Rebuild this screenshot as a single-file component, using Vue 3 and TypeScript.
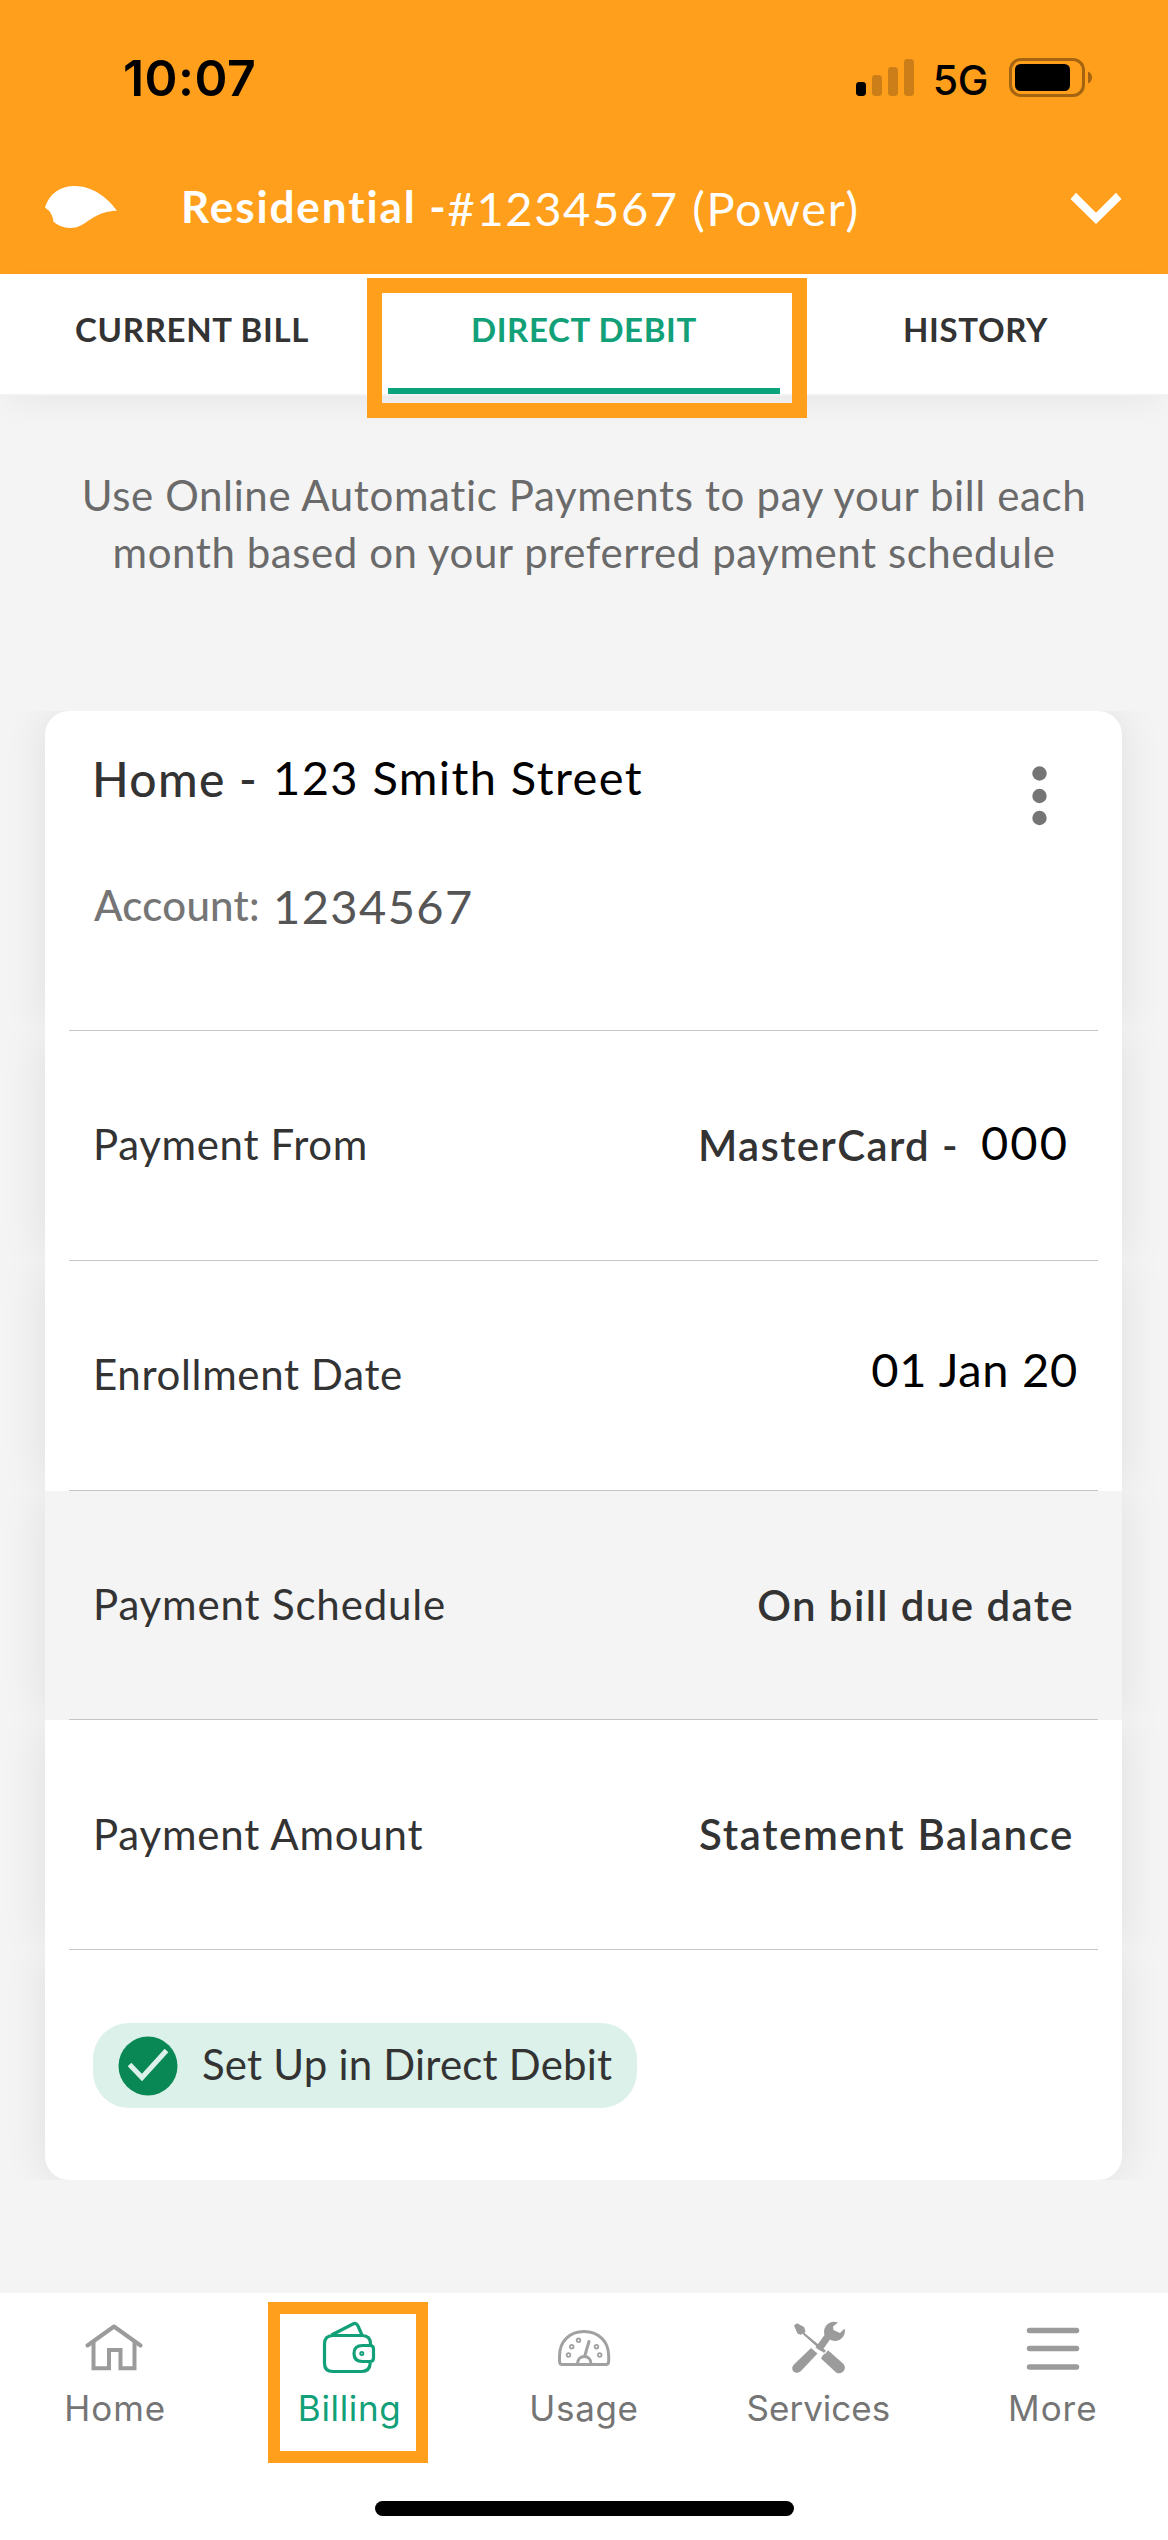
<script setup lang="ts">
interface Tab { label: string; cls: string }
interface NavItem { id: string; label: string; spacing: string }

const tabs: Tab[] = [
  { label: 'CURRENT BILL', cls: 'tab-bill' },
  { label: 'DIRECT DEBIT', cls: 'tab-debit' },
  { label: 'HISTORY', cls: 'tab-history' }
]

const navItems: NavItem[] = [
  { id: 'home', label: 'Home', spacing: 'wide' },
  { id: 'billing', label: 'Billing', spacing: 'mid' },
  { id: 'usage', label: 'Usage', spacing: 'mid' },
  { id: 'services', label: 'Services', spacing: 'none' },
  { id: 'more', label: 'More', spacing: 'wide' }
]
</script>

<template>
  <div class="app">
    <header class="header">
      <div class="status">
        <span class="time">10:07</span>
        <div class="indicators">
          <svg class="signal" width="58" height="37" viewBox="0 0 58 37">
            <rect x="0" y="23" width="10" height="14" rx="3.4" fill="#000" />
            <rect x="16" y="16" width="10" height="21" rx="3.4" fill="#cc7f18" />
            <rect x="32" y="8" width="10" height="29" rx="3.4" fill="#cc7f18" />
            <rect x="48" y="0" width="10" height="37" rx="3.4" fill="#cc7f18" />
          </svg>
          <span class="network">5G</span>
          <svg class="battery" width="84" height="39" viewBox="0 0 84 39">
            <rect x="1.5" y="1.5" width="73" height="36" rx="10.5" fill="none" stroke="#a56410" stroke-width="3" />
            <rect x="6" y="6" width="55" height="27" rx="5.5" fill="#000" />
            <path d="M79 13.500c5.400 2 5.400 10 0 12z" fill="#a56410" />
          </svg>
        </div>
      </div>
      <div class="account">
        <svg class="leaf" width="72" height="42" viewBox="0 0 72 42">
          <path d="M0 21.500C4 8 15 0 29.500 0C47 0 62 11 72 24.700C64 24.700 56 26.500 46 33C37 39 33 42 25.500 42C18 42 12 39 8.400 35.500C8 32 7.500 30 6 28C5 25 3 24 0 21.500z" fill="#fff" />
        </svg>
        <span class="account-type">Residential -</span>
        <span class="account-number">#1234567 (Power)</span>
        <svg class="chevron" width="52" height="32" viewBox="0 0 52 32">
          <path d="M0.500 7L6 0.700L26 20.700L46 0.700L51.500 7L26 32z" fill="#fff" />
        </svg>
      </div>
    </header>

    <nav class="tabs">
      <span v-for="tab in tabs" :key="tab.label" class="tab" :class="tab.cls">{{ tab.label }}</span>
      <div class="underline"></div>
      <div class="highlight highlight-tab"></div>
    </nav>

    <main class="content">
      <p class="intro">
        <span class="intro-a">Use Online Automatic Payments to pay your bill each</span><br />
        <span class="intro-b">month based on your preferred payment schedule</span>
      </p>

      <section class="card">
        <div class="block block-head">
          <div class="inner head">
            <div class="line">
              <span class="place">Home -</span>
              <span class="street">123 Smith Street</span>
              <svg class="dots" width="15" height="60" viewBox="0 0 15 60">
                <circle cx="7.500" cy="7.500" r="7.200" fill="#757575" />
                <circle cx="7.500" cy="30" r="7.200" fill="#757575" />
                <circle cx="7.500" cy="52" r="7.200" fill="#757575" />
              </svg>
            </div>
            <div class="line line-account">
              <span class="account-label">Account:</span>
              <span class="account-value">1234567</span>
            </div>
          </div>
        </div>
        <div class="block">
          <div class="inner row">
            <span class="label">Payment From</span>
            <span class="value card-type">MasterCard -</span>
            <span class="entry digits">000</span>
          </div>
        </div>
        <div class="block">
          <div class="inner row">
            <span class="label">Enrollment Date</span>
            <span class="entry date">01 Jan 20</span>
          </div>
        </div>
        <div class="block shaded">
          <div class="inner row row-short">
            <span class="label schedule">Payment Schedule</span>
            <span class="value due">On bill due date</span>
          </div>
        </div>
        <div class="block">
          <div class="inner row">
            <span class="label amount">Payment Amount</span>
            <span class="value balance">Statement Balance</span>
          </div>
        </div>
        <div class="block block-foot">
          <div class="pill">
            <svg width="60" height="60" viewBox="0 0 60 60">
              <circle cx="30" cy="30" r="29.500" fill="#098755" />
              <path d="M11.500 28.500L24 41.500L48.500 14.500" fill="none" stroke="#dbf1e9" stroke-width="5" />
            </svg>
            <span>Set Up in Direct Debit</span>
          </div>
        </div>
      </section>
    </main>

    <footer class="footer">
      <nav class="nav">
        <div v-for="item in navItems" :key="item.id" class="nav-item" :class="[item.id, item.spacing]">
          <svg v-if="item.id === 'home'" width="60" height="60" viewBox="85 2318 60 60">
            <g fill="none" stroke="#9b9b9b" stroke-width="4" stroke-linecap="round" stroke-linejoin="round">
              <path d="M87.500 2345.500L114 2326.500L140.500 2345.500" />
              <path d="M93.500 2342V2368.300H109V2350H120.500V2368.300H134.500V2342" stroke-linejoin="miter" />
            </g>
          </svg>
          <svg v-else-if="item.id === 'billing'" width="60" height="60" viewBox="320.500 2318 60 60">
            <g fill="none" stroke="#11a078" stroke-width="3.200" stroke-linejoin="round">
              <path d="M371 2345V2344Q371 2335.500 362.500 2335.500H333.500Q325 2335.500 325 2344V2363.500Q325 2371.500 333.500 2371.500H362.500Q370 2371.500 370.800 2363" />
              <path d="M332 2335L353.500 2324Q357 2322.300 358.500 2326L362.500 2335" />
              <path d="M370.500 2345.500H363Q354.500 2345.500 354.500 2353.500Q354.500 2361.500 363 2361.500H370.500Q374 2361.500 374 2358V2349Q374 2345.500 370.500 2345.500z" />
              <circle cx="362.300" cy="2353.600" r="1.600" stroke-width="1.800" />
            </g>
          </svg>
          <svg v-else-if="item.id === 'usage'" width="60" height="60" viewBox="554 2318 60 60">
            <g fill="none" stroke="#a1a1a1" stroke-width="3" stroke-linecap="round" stroke-linejoin="round">
              <path d="M562 2364.500Q559.500 2364.500 559.500 2361V2356C559.500 2341 570 2331.500 584 2331.500S608.700 2341 608.700 2356V2361Q608.700 2364.500 606 2364.500z" />
              <path d="M577.500 2364C577.500 2354 591 2354 591 2364" />
              <path d="M589 2341.500L585 2355" />
              <g stroke-width="1.800">
                <circle cx="568.500" cy="2355" r="1.800" />
                <circle cx="571.700" cy="2346.700" r="1.800" />
                <circle cx="578.500" cy="2340.300" r="1.800" />
                <circle cx="596.500" cy="2346.700" r="1.800" />
                <circle cx="599.700" cy="2355" r="1.800" />
              </g>
            </g>
          </svg>
          <svg v-else-if="item.id === 'services'" width="60" height="60" viewBox="788.500 2318 60 60">
            <g fill="#9b9b9b">
              <path d="M794.500 2325.500L797.500 2323.300L804.500 2327L806 2331L805 2333L826.500 2350.700L824.500 2353L802.500 2333.500L801.500 2335L798 2333.500z" />
              <path d="M828.500 2350.300L843.500 2363.500C849 2369 841 2377 835.500 2371.500L821.500 2358.500L823.500 2355L826.500 2353z" />
              <path d="M838.500 2322.500C830 2319 822.500 2327 825 2335L816 2347.500L822 2351.500L830.500 2339.500C838 2344 847.500 2337 845 2328.500L840.500 2333L834 2330L833.500 2326.500z" />
              <path d="M811.500 2348L818 2353.500L801.500 2371C796 2376 789.500 2369.500 794.500 2364.500z" />
            </g>
          </svg>
          <svg v-else width="60" height="60" viewBox="1023 2318 60 60">
            <path d="M1029.500 2330.500H1076.500M1029.500 2348.500H1076.500M1029.500 2367H1076.500" stroke="#9b9b9b" stroke-width="5.500" stroke-linecap="round" />
          </svg>
          <span>{{ item.label }}</span>
        </div>
        <div class="highlight highlight-nav"></div>
      </nav>
      <div class="home-bar"></div>
    </footer>
  </div>
</template>

<style>
body {
  margin: 0;
}
</style>

<style scoped>
.app {
  display: flex;
  flex-direction: column;
  width: 1168px;
  height: 2540px;
  overflow: hidden;
  background: #f4f4f4;
  font-family: Lato, "Open Sans", sans-serif;
  font-size: 42px;
  line-height: 60px;
  color: #333;
  white-space: nowrap;
}
.app svg {
  display: block;
  flex: none;
}
.header {
  height: 274px;
  flex: none;
  background: #ff9f1c;
}
.status {
  display: flex;
  align-items: flex-start;
  justify-content: space-between;
  height: 92px;
  padding: 48px 75px 0 123px;
  color: #000;
  font-family: Inter, sans-serif;
}
.time {
  font-size: 50px;
  font-weight: 600;
  letter-spacing: 0.48px;
}
.indicators {
  display: flex;
  align-items: flex-start;
}
.signal {
  margin-top: 11px;
}
.network {
  margin: 2px 0 0 19px;
  font-size: 41px;
  font-weight: 500;
  letter-spacing: -0.34px;
}
.battery {
  margin: 10px 0 0 21px;
}
.account {
  display: flex;
  align-items: flex-start;
  height: 98px;
  padding: 36px 46px 0 45px;
  color: #fff;
}
.leaf {
  margin-top: 10px;
}
.account-type {
  margin-left: 64px;
  font-size: 44px;
  font-weight: 700;
  letter-spacing: 1.91px;
}
.account-number {
  margin-top: 2px;
  font-size: 47px;
  letter-spacing: 1.63px;
}
.chevron {
  margin: 16px 0 0 auto;
}
.tabs {
  position: relative;
  z-index: 1;
  display: flex;
  align-items: flex-start;
  flex: none;
  box-sizing: border-box;
  height: 122px;
  padding-top: 25px;
  background: #fff;
  border-bottom: 2px solid #f2f2f2;
  box-shadow: 0 12px 34px -8px rgba(0, 0, 0, 0.06);
  font-size: 33px;
  font-weight: 700;
}
.tab-bill {
  margin-left: 75px;
  width: 396px;
  letter-spacing: 0.7px;
}
.tab-debit {
  width: 432px;
  letter-spacing: 0.6px;
  color: #11a078;
}
.tab-history {
  letter-spacing: 0.65px;
}
.underline {
  position: absolute;
  left: 388px;
  top: 114px;
  width: 392px;
  height: 6px;
  background: #0ba37b;
}
.highlight {
  position: absolute;
  box-sizing: border-box;
  border: 15px solid #ff9f1c;
}
.highlight-tab {
  left: 367px;
  top: 4px;
  width: 440px;
  height: 140px;
}
.content {
  flex: none;
  height: 1897px;
}
.intro {
  box-sizing: border-box;
  height: 315px;
  margin: 0;
  padding-top: 71px;
  text-align: center;
  line-height: 57px;
  color: #6a6a6a;
}
.intro-a {
  letter-spacing: 0.64px;
}
.intro-b {
  letter-spacing: 0.57px;
}
.card {
  width: 1077px;
  margin-left: 45px;
}
.block {
  padding: 0 24px;
  background: #fff;
  box-shadow: 0 0 44px rgba(0, 0, 0, 0.09);
  clip-path: inset(0 -46px);
}
.block-head {
  border-radius: 24px 24px 0 0;
}
.block-foot {
  height: 230px;
  box-sizing: border-box;
  padding: 73px 48px 0;
  border-radius: 0 0 24px 24px;
}
.shaded {
  background: #f4f4f4;
}
.inner {
  box-sizing: border-box;
  border-bottom: 1px solid #c6c6c6;
}
.head {
  height: 320px;
  padding: 36px 51px 0 23px;
}
.line {
  display: flex;
  align-items: flex-start;
  height: 125px;
}
.place {
  width: 181px;
  margin-top: 2px;
  font-size: 48px;
  font-weight: 500;
  letter-spacing: 1.3px;
}
.street {
  font-size: 47px;
  letter-spacing: 1.4px;
  color: #000;
}
.dots {
  margin: 19px 0 0 auto;
}
.account-label {
  width: 179px;
  margin: 3px 0 0 2px;
  font-weight: 500;
  letter-spacing: 0.25px;
  color: #757575;
}
.account-value {
  margin-top: 4px;
  font-size: 47px;
  letter-spacing: 1.41px;
  color: #555;
}
.row {
  display: flex;
  align-items: flex-start;
  height: 230px;
  padding: 83px 24px 0 24px;
}
.row-short {
  height: 229px;
}
.label {
  margin-right: auto;
  letter-spacing: 0.66px;
}
.schedule {
  letter-spacing: 0.84px;
}
.amount {
  margin-top: 1px;
  letter-spacing: 0.8px;
}
.value {
  margin-top: 1px;
  font-weight: 600;
  letter-spacing: 1.64px;
}
.card-type {
  letter-spacing: 1.35px;
}
.due {
  letter-spacing: 1.4px;
}
.entry {
  font-size: 47px;
  color: #000;
}
.digits {
  margin: -2px 5px 0 22px;
  letter-spacing: 2.1px;
}
.date {
  margin: -5px -4px 0 0;
  letter-spacing: 0.71px;
}
.pill {
  display: flex;
  align-items: center;
  box-sizing: border-box;
  width: 544px;
  height: 85px;
  padding-left: 25px;
  border-radius: 36px;
  background: #dbf1e9;
}
.pill span {
  margin: -3px 0 0 24px;
  letter-spacing: 0.2px;
}
.footer {
  flex: none;
  height: 247px;
  background: #fff;
}
.nav {
  position: relative;
  display: flex;
  width: 1172px;
  height: 208px;
  margin-left: -2px;
}
.nav-item {
  display: flex;
  flex: 1;
  flex-direction: column;
  align-items: center;
  padding-top: 25px;
  font-family: Inter, sans-serif;
  font-size: 35px;
  color: #757575;
}
.wide {
  letter-spacing: 1px;
}
.mid {
  letter-spacing: 0.65px;
}
.billing {
  color: #11a078;
}
.highlight-nav {
  left: 270px;
  top: 9px;
  width: 160px;
  height: 161px;
  border-width: 12px;
}
.home-bar {
  width: 419px;
  height: 15px;
  margin: 0 auto;
  border-radius: 8px;
  background: #000;
}
</style>
